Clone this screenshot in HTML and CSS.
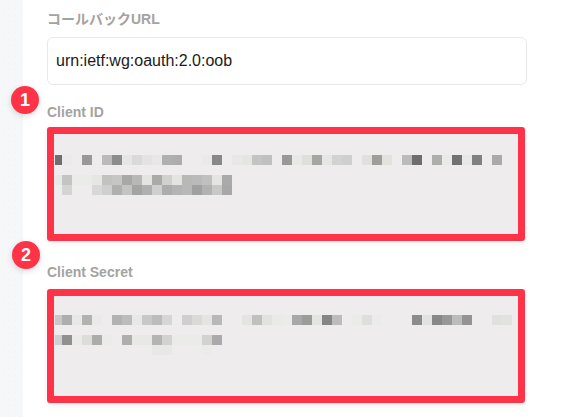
FILE: index.html
```html
<!DOCTYPE html>
<html lang="ja">
<head>
    <meta charset="UTF-8">
    <meta name="viewport" content="width=device-width, initial-scale=1.0">
    <title>Client settings</title>
    <link rel="stylesheet" href="styles.css">
</head>
<body>
    <aside class="sidebar"></aside>

    <main class="content">
        <div class="field field-url">
            <label class="field-label">コールバックURL</label>
            <div class="text-input">urn:ietf:wg:oauth:2.0:oob</div>
        </div>

        <div class="field field-id">
            <span class="badge badge-id">1</span>
            <label class="field-label">Client ID</label>
            <div class="secret-box">
                <svg class="mosaic" viewBox="54 134 464 100" aria-hidden="true">
                    <g transform="translate(0 155)">
                        <rect class="edge" x="55" fill="#6f6f6f"/>
                        <rect x="62" fill="#ebebeb"/>
                        <rect x="82" fill="#999997"/>
                        <rect x="102" fill="#bbbbbb"/>
                        <rect x="112" fill="#8c8c8c"/>
                        <rect x="122" fill="#e6e6e6"/>
                        <rect x="132" fill="#dbdada"/>
                        <rect x="142" fill="#e4e2e2"/>
                        <rect x="152" fill="#e8e8e6"/>
                        <rect x="162" fill="#b0b0b0"/>
                        <rect x="172" fill="#adadad"/>
                        <rect x="202" fill="#eaeae8"/>
                        <rect x="212" fill="#888888"/>
                        <rect x="232" fill="#e8e8e6"/>
                        <rect x="242" fill="#e5e5e3"/>
                        <rect x="252" fill="#c4c4c2"/>
                        <rect x="262" fill="#c0c0c0"/>
                        <rect x="282" fill="#999999"/>
                        <rect x="292" fill="#e8e8e6"/>
                        <rect x="302" fill="#dfdfdb"/>
                        <rect x="312" fill="#a5a5a3"/>
                        <rect x="322" fill="#e6e6e4"/>
                        <rect x="332" fill="#d2d2d2"/>
                        <rect x="342" fill="#cfcfcf"/>
                        <rect x="362" fill="#e0e0de"/>
                        <rect x="372" fill="#a09e9a"/>
                        <rect x="382" fill="#e2e2de"/>
                        <rect x="402" fill="#bbbbbb"/>
                        <rect x="412" fill="#6e6e6e"/>
                        <rect x="432" fill="#aeaeac"/>
                        <rect x="442" fill="#eaeae8"/>
                        <rect x="452" fill="#727272"/>
                        <rect x="462" fill="#e8e8e8"/>
                        <rect x="472" fill="#808080"/>
                        <rect x="492" fill="#aaaaaa"/>
                    </g>
                    <g transform="translate(0 175)">
                        <rect class="edge" x="55" fill="#e8e8e6"/>
                        <rect x="62" fill="#c4c4c4"/>
                        <rect x="72" fill="#ebebe9"/>
                        <rect x="82" fill="#ebebe9"/>
                        <rect x="92" fill="#e6e6e4"/>
                        <rect x="102" fill="#c2c2c0"/>
                        <rect x="112" fill="#c6c6c4"/>
                        <rect x="122" fill="#a8a8a6"/>
                        <rect x="132" fill="#b8b8b8"/>
                        <rect x="142" fill="#e4e4e2"/>
                        <rect x="152" fill="#aaaaa8"/>
                        <rect x="162" fill="#d0d0ce"/>
                        <rect x="172" fill="#e4e4e2"/>
                        <rect x="182" fill="#b8b8b6"/>
                        <rect x="192" fill="#bababa"/>
                        <rect x="202" fill="#c0c0c0"/>
                        <rect x="212" fill="#e4e4e2"/>
                        <rect x="222" fill="#aaaaaa"/>
                    </g>
                    <g transform="translate(0 185)">
                        <rect x="62" fill="#d4d4d4"/>
                        <rect x="92" fill="#d8d8d8"/>
                        <rect x="102" fill="#cfcfcf"/>
                        <rect x="112" fill="#b0b0b0"/>
                        <rect x="122" fill="#c4c4c2"/>
                        <rect x="132" fill="#a4a4a4"/>
                        <rect x="142" fill="#b0b0b0"/>
                        <rect x="152" fill="#cfcfcf"/>
                        <rect x="162" fill="#acacac"/>
                        <rect x="172" fill="#b4b4b4"/>
                        <rect x="182" fill="#b8b8b8"/>
                        <rect x="192" fill="#a0a09e"/>
                        <rect x="202" fill="#b2b2b2"/>
                        <rect x="212" fill="#c8c8c8"/>
                        <rect x="222" fill="#a8a8a8"/>
                    </g>
                </svg>
            </div>
        </div>

        <div class="field field-secret">
            <span class="badge badge-secret">2</span>
            <label class="field-label">Client Secret</label>
            <div class="secret-box">
                <svg class="mosaic" viewBox="54 296 464 100" aria-hidden="true">
                    <g transform="translate(0 315)">
                        <rect class="edge" x="55" fill="#c8c8c6"/>
                        <rect x="62" fill="#aeaeac"/>
                        <rect x="72" fill="#e8e8e8"/>
                        <rect x="82" fill="#b2b2b0"/>
                        <rect x="92" fill="#eaeae8"/>
                        <rect x="112" fill="#b2b2b2"/>
                        <rect x="122" fill="#bcbcbc"/>
                        <rect x="132" fill="#e8e8e6"/>
                        <rect x="142" fill="#c8c8c8"/>
                        <rect x="152" fill="#bcbcba"/>
                        <rect x="162" fill="#d6d6d6"/>
                        <rect x="182" fill="#cfcfcf"/>
                        <rect x="192" fill="#dcdad8"/>
                        <rect x="202" fill="#e4e4e2"/>
                        <rect x="212" fill="#b8b8b8"/>
                        <rect x="242" fill="#e4e4e2"/>
                        <rect x="252" fill="#c0c0be"/>
                        <rect x="262" fill="#e2e2e0"/>
                        <rect x="272" fill="#eaeae8"/>
                        <rect x="282" fill="#ebebe9"/>
                        <rect x="292" fill="#a8a8a8"/>
                        <rect x="302" fill="#9c9c9a"/>
                        <rect x="312" fill="#e4e4e0"/>
                        <rect x="322" fill="#858585"/>
                        <rect x="332" fill="#bcbcbc"/>
                        <rect x="352" fill="#ebebe9"/>
                        <rect x="362" fill="#dededc"/>
                        <rect x="372" fill="#ebebeb"/>
                        <rect x="412" fill="#8c8c8c"/>
                        <rect x="422" fill="#e2e2e0"/>
                        <rect x="432" fill="#888888"/>
                        <rect x="442" fill="#989896"/>
                        <rect x="452" fill="#bcbcbc"/>
                        <rect x="462" fill="#949494"/>
                        <rect x="492" fill="#e0e0de"/>
                        <rect x="502" fill="#e2e2e0"/>
                    </g>
                    <g transform="translate(0 335)">
                        <rect class="edge" x="55" fill="#d0d0d0"/>
                        <rect x="62" fill="#909090"/>
                        <rect x="72" fill="#eaeae8"/>
                        <rect x="82" fill="#dcdcda"/>
                        <rect x="92" fill="#acacac"/>
                        <rect x="102" fill="#ebebe9"/>
                        <rect x="122" fill="#aeaeac"/>
                        <rect x="132" fill="#e8e8e6"/>
                        <rect x="142" fill="#e8e8e6"/>
                        <rect x="152" fill="#b4b4b2"/>
                        <rect x="162" fill="#d2d2d0"/>
                        <rect x="172" fill="#ebebe9"/>
                        <rect x="182" fill="#ebebe9"/>
                        <rect x="192" fill="#ebebe9"/>
                        <rect x="202" fill="#d2d2d0"/>
                        <rect x="212" fill="#aaaaaa"/>
                    </g>
                    <g transform="translate(0 345)">
                        <rect x="152" fill="#e8e8e6"/>
                        <rect x="162" fill="#e8e8e6"/>
                        <rect x="202" fill="#ebebe9"/>
                    </g>
                </svg>
            </div>
        </div>
    </main>
</body>
</html>
```

FILE: styles.css
```css
* {
    margin: 0;
    padding: 0;
    box-sizing: border-box;
    font-family: "Liberation Sans", "Noto Sans CJK JP", sans-serif;
}

html, body {
    height: 100%;
    overflow: hidden;
}

body {
    display: flex;
    background: white;
}

.sidebar {
    width: 23px;
    flex-shrink: 0;
    background-color: #f6f7f9;
    background-image: radial-gradient(#f1f2f5 0.6px, transparent 0.8px);
    background-size: 6px 6px;
}

.content {
    flex: 1;
    padding: 9px 0 0 24px;
}

.field {
    position: relative;
    width: 480px;
}

.field-label {
    display: block;
    height: 20px;
    font-size: 14px;
    font-weight: bold;
    line-height: 20px;
    color: #a5a3a0;
}

.text-input {
    height: 48px;
    margin-top: 8px;
    padding-left: 8px;
    background: white;
    border: 1px solid #e8e8e8;
    border-radius: 6px;
    font-size: 16px;
    line-height: 46px;
    color: #1a1a1a;
}

.field-id {
    margin-top: 17px;
}

.field-id .secret-box {
    margin-top: 5px;
}

.field-secret {
    margin-top: 21px;
}

.field-secret .secret-box {
    margin-top: 7px;
}

.secret-box {
    width: 478px;
    height: 114px;
    background: #eeeced;
    border: 7px solid #ff3347;
    border-radius: 3px;
    box-shadow: 0 2px 6px rgba(0, 0, 0, 0.08);
}

.mosaic {
    display: block;
    width: 464px;
    height: 100px;
}

.mosaic rect {
    width: 10px;
    height: 10px;
}

.mosaic rect.edge {
    width: 7px;
}

.badge {
    position: absolute;
    left: -36px;
    display: flex;
    align-items: center;
    justify-content: center;
    width: 28px;
    height: 28px;
    background: #ff3347;
    border-radius: 50%;
    box-shadow: 0 2px 6px rgba(0, 0, 0, 0.15);
    font-size: 18px;
    font-weight: bold;
    color: white;
}

.badge-id {
    top: -16px;
}

.badge-secret {
    top: -21px;
    left: -35px;
}
```
